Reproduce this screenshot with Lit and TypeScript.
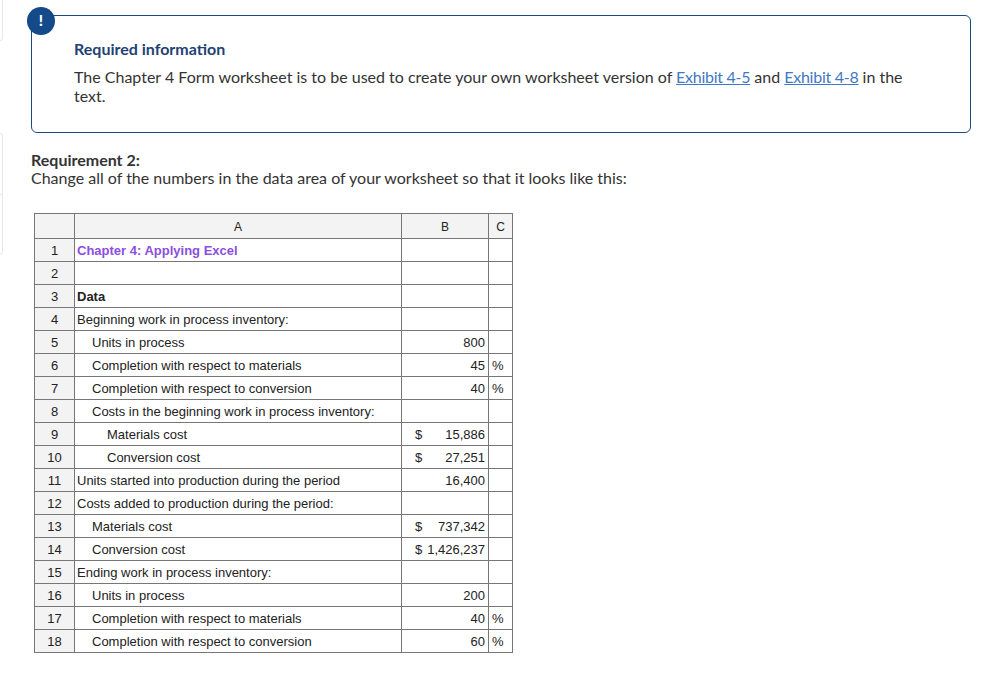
import {LitElement, html, css} from 'lit';
import {customElement} from 'lit/decorators.js';

type Row = {a?: string; b?: string; c?: string; cur?: string; indent?: number; cls?: string};

const rows: Row[] = [
    {a: 'Chapter 4: Applying Excel', cls: 'title'},
    {},
    {a: 'Data', cls: 'bold'},
    {a: 'Beginning work in process inventory:'},
    {a: 'Units in process', indent: 1, b: '800'},
    {a: 'Completion with respect to materials', indent: 1, b: '45', c: '%'},
    {a: 'Completion with respect to conversion', indent: 1, b: '40', c: '%'},
    {a: 'Costs in the beginning work in process inventory:', indent: 1},
    {a: 'Materials cost', indent: 2, cur: '$', b: '15,886'},
    {a: 'Conversion cost', indent: 2, cur: '$', b: '27,251'},
    {a: 'Units started into production during the period', b: '16,400'},
    {a: 'Costs added to production during the period:'},
    {a: 'Materials cost', indent: 1, cur: '$', b: '737,342'},
    {a: 'Conversion cost', indent: 1, cur: '$', b: '1,426,237'},
    {a: 'Ending work in process inventory:'},
    {a: 'Units in process', indent: 1, b: '200'},
    {a: 'Completion with respect to materials', indent: 1, b: '40', c: '%'},
    {a: 'Completion with respect to conversion', indent: 1, b: '60', c: '%'},
];

@customElement('app-root')
export class AppRoot extends LitElement {
    static styles = css`
        :host {
            display: block;
            position: relative;
            overflow: hidden;
            width: 987px;
            height: 691px;
            box-sizing: border-box;
            padding: 15px 16px 0 31px;
            background: #fff;
            color: #333;
            font-family: Lato, 'Open Sans', sans-serif;
            font-size: 16px;
        }
        .edge {
            position: absolute;
            left: -10px;
            width: 13px;
            box-sizing: border-box;
            border: 1px solid #e8e8e8;
            border-radius: 3px;
        }
        .edge.one {
            top: -10px;
            height: 51px;
        }
        .edge.two {
            top: 133px;
            height: 122px;
        }
        .edge.two::after {
            content: '';
            display: block;
            margin-top: 60px;
            border-top: 1px solid #e8e8e8;
        }
        .card {
            position: relative;
            box-sizing: border-box;
            height: 118px;
            padding: 24px 60px 0 42px;
            border: 1px solid #1a4a85;
            border-radius: 6px;
        }
        .badge {
            position: absolute;
            left: -5px;
            top: -9px;
            width: 28px;
            height: 28px;
            border-radius: 50%;
            background: #14498a;
            color: #fff;
            font-weight: 900;
            font-size: 15px;
            line-height: 26px;
            text-align: center;
        }
        h2 {
            margin: 0 0 9px;
            font-size: 16px;
            line-height: 18px;
            font-weight: 700;
            color: #1f4273;
        }
        .card p {
            margin: 0;
            line-height: 19px;
        }
        a {
            color: #3f78c4;
            text-decoration: underline;
            letter-spacing: -0.27px;
        }
        .req {
            margin: 18px 0 26px;
            line-height: 18px;
        }
        .req b {
            display: block;
            font-weight: 700;
        }
        table {
            margin-left: 3px;
            border-collapse: collapse;
            table-layout: fixed;
            width: 478px;
            font-family: 'Liberation Sans', Arial, sans-serif;
            font-size: 13px;
            color: #222;
        }
        th, td {
            box-sizing: border-box;
            height: 23px;
            padding: 0;
            border: 1px solid #777;
            font-weight: 400;
            white-space: nowrap;
        }
        thead th {
            height: 25px;
            padding-top: 1px;
            background: #f3f3f3;
            font-size: 12px;
        }
        tbody th {
            background: #f3f3f3;
            font-size: 13px;
        }
        td.a {
            padding-left: 2px;
        }
        td.i1 {
            padding-left: 17px;
        }
        td.i2 {
            padding-left: 32px;
        }
        td.title {
            color: #8a4fe0;
            font-weight: 700;
        }
        td.bold {
            font-weight: 700;
        }
        .num {
            display: flex;
            justify-content: space-between;
            padding: 0 3px 0 13px;
        }
        .num span:last-child {
            margin-left: auto;
        }
        td.c {
            padding-left: 3px;
        }
    `;

    render() {
        return html`
            <div class="edge one"></div>
            <div class="edge two"></div>
            <div class="card">
                <div class="badge">!</div>
                <h2>Required information</h2>
                <p>The Chapter 4 Form worksheet is to be used to create your own worksheet version of
                <a href="#">Exhibit 4-5</a> and <a href="#">Exhibit 4-8</a> in the<br />text.</p>
            </div>
            <div class="req">
                <b>Requirement 2:</b>
                Change all of the numbers in the data area of your worksheet so that it looks like this:
            </div>
            <table>
                <colgroup>
                    <col style="width:40px" />
                    <col style="width:327px" />
                    <col style="width:87px" />
                    <col style="width:24px" />
                </colgroup>
                <thead>
                    <tr><th></th><th>A</th><th>B</th><th>C</th></tr>
                </thead>
                <tbody>
                    ${rows.map((r, i) => html`
                        <tr>
                            <th>${i + 1}</th>
                            <td class="a ${r.indent ? 'i' + r.indent : ''} ${r.cls ?? ''}">${r.a}</td>
                            <td><div class="num"><span>${r.cur}</span><span>${r.b}</span></div></td>
                            <td class="c">${r.c}</td>
                        </tr>
                    `)}
                </tbody>
            </table>
        `;
    }
}
